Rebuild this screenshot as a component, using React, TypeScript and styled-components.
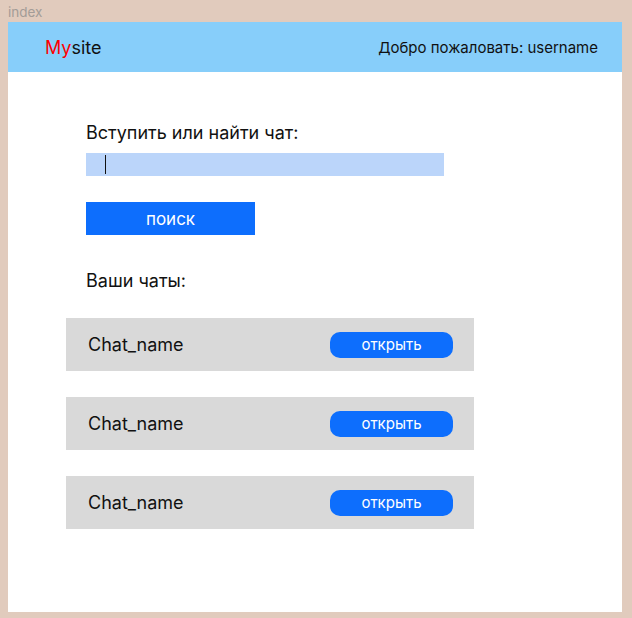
import styled, { createGlobalStyle } from 'styled-components';

const GlobalStyle = createGlobalStyle`
  body {
    margin: 0;
    background: #e1cbbd;
    font-family: Inter, 'Noto Sans', sans-serif;
  }
`;

const chats = ['Chat_name', 'Chat_name', 'Chat_name'];

export default function App() {
  return (
    <>
      <GlobalStyle />
      <Page>
        <FrameLabel>index</FrameLabel>
        <Frame>
          <Header>
            <Logo>
              <span>My</span>site
            </Logo>
            <Welcome>Добро пожаловать: username</Welcome>
          </Header>
          <Content>
            <Label>Вступить или найти чат:</Label>
            <SearchInput>
              <Caret />
            </SearchInput>
            <SearchButton>поиск</SearchButton>
            <Label $gap={35}>Ваши чаты:</Label>
            <ChatList>
              {chats.map((name, i) => (
                <ChatRow key={i}>
                  <ChatName>{name}</ChatName>
                  <OpenButton>открыть</OpenButton>
                </ChatRow>
              ))}
            </ChatList>
          </Content>
        </Frame>
      </Page>
    </>
  );
}

const Page = styled.div`
  padding: 0 10px 6px 8px;
`;

const FrameLabel = styled.div`
  height: 22px;
  line-height: 24px;
  font-size: 13.5px;
  color: #a39c97;
`;

const Frame = styled.div`
  width: 614px;
  height: 590px;
  background: #fff;
`;

const Header = styled.div`
  height: 50px;
  background: #87cefa;
  display: flex;
  align-items: center;
  justify-content: space-between;
  padding: 0 24px 0 37px;
`;

const Logo = styled.div`
  font-size: 18px;
  color: #111;
  span {
    color: #ff0000;
  }
`;

const Welcome = styled.div`
  font-size: 15px;
  color: #111;
`;

const Content = styled.div`
  padding: 50px 0 0 78px;
  display: flex;
  flex-direction: column;
  align-items: flex-start;
`;

const Label = styled.div<{ $gap?: number }>`
  margin-top: ${(p) => p.$gap ?? 0}px;
  font-size: 18px;
  line-height: 22px;
  color: #111;
`;

const SearchInput = styled.div`
  margin-top: 9px;
  width: 358px;
  height: 23px;
  background: #bbd5fa;
  display: flex;
  align-items: center;
  padding-left: 19px;
  box-sizing: border-box;
`;

const Caret = styled.div`
  width: 1px;
  height: 19px;
  background: #111;
`;

const SearchButton = styled.div`
  margin-top: 26px;
  width: 169px;
  height: 33px;
  background: #0d6efd;
  color: #fff;
  font-size: 17px;
  display: flex;
  align-items: center;
  justify-content: center;
`;

const ChatList = styled.div`
  margin: 26px 0 0 -20px;
  display: flex;
  flex-direction: column;
  gap: 26px;
`;

const ChatRow = styled.div`
  width: 408px;
  height: 53px;
  background: #d9d9d9;
  display: flex;
  align-items: center;
  justify-content: space-between;
  padding: 0 21px 0 22px;
  box-sizing: border-box;
`;

const ChatName = styled.div`
  font-size: 18px;
  color: #111;
`;

const OpenButton = styled.div`
  width: 123px;
  height: 26px;
  border-radius: 10px;
  background: #0d6efd;
  color: #fff;
  font-size: 15px;
  display: flex;
  align-items: center;
  justify-content: center;
`;
